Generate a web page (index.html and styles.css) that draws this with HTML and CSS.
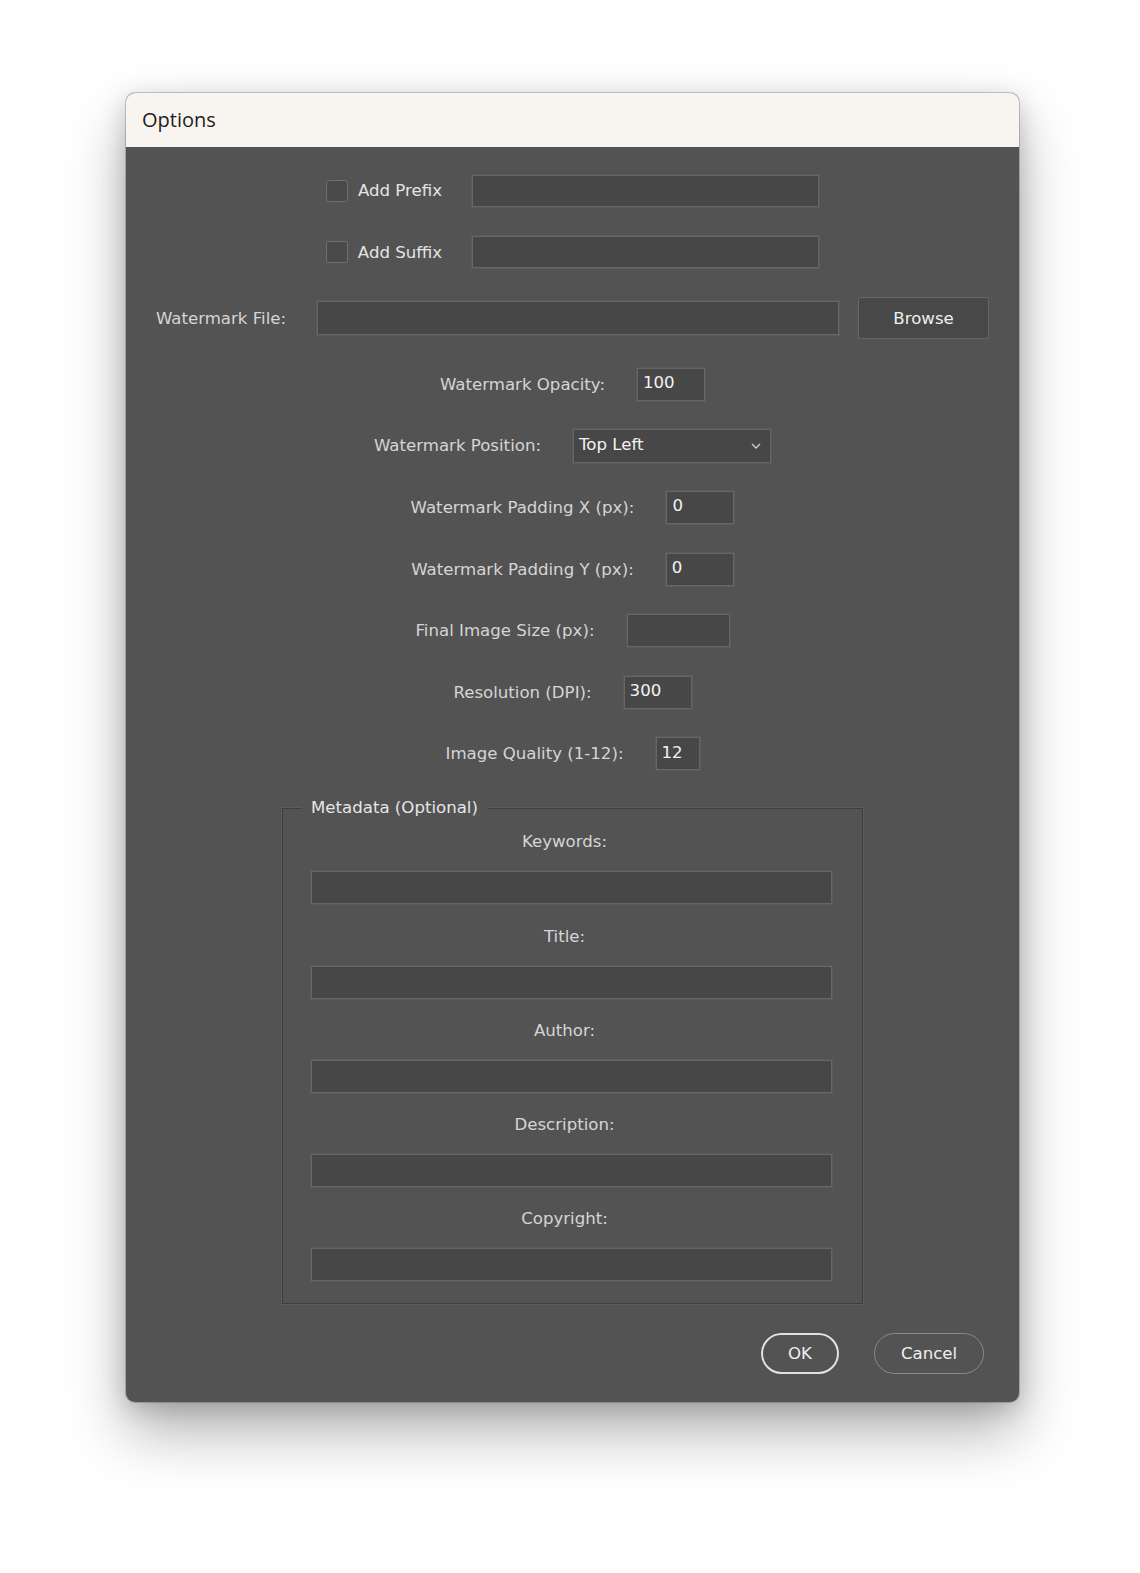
FILE: index.html
```html
<!DOCTYPE html>
<html lang="en">
<head>
<meta charset="utf-8">
<title>Options</title>
<link rel="stylesheet" href="styles.css">
</head>
<body>
<div class="dialog">
  <div class="titlebar">Options</div>
  <div class="content">
    <div class="rows">
      <div class="row">
        <span class="checkbox"></span>
        <span class="check-label">Add Prefix</span>
        <span class="field affix"></span>
      </div>
      <div class="row">
        <span class="checkbox"></span>
        <span class="check-label">Add Suffix</span>
        <span class="field affix"></span>
      </div>
      <div class="row row-file">
        <span class="label">Watermark File:</span>
        <span class="field file"></span>
        <button class="browse">Browse</button>
      </div>
      <div class="row">
        <span class="label">Watermark Opacity:</span>
        <span class="field small">100</span>
      </div>
      <div class="row">
        <span class="label">Watermark Position:</span>
        <span class="field select">Top Left
          <svg class="chev" width="10" height="6" viewBox="0 0 10 6"><polyline points="1,1 5,5 9,1" fill="none" stroke="#cfcfcf" stroke-width="1.3"/></svg>
        </span>
      </div>
      <div class="row">
        <span class="label">Watermark Padding X (px):</span>
        <span class="field small">0</span>
      </div>
      <div class="row">
        <span class="label">Watermark Padding Y (px):</span>
        <span class="field small">0</span>
      </div>
      <div class="row">
        <span class="label">Final Image Size (px):</span>
        <span class="field medium"></span>
      </div>
      <div class="row">
        <span class="label">Resolution (DPI):</span>
        <span class="field small">300</span>
      </div>
      <div class="row">
        <span class="label">Image Quality (1-12):</span>
        <span class="field tiny">12</span>
      </div>
    </div>

    <div class="panel">
      <span class="legend">Metadata (Optional)</span>
      <div class="meta-item">
        <div class="meta-label">Keywords:</div>
        <div class="field meta-field"></div>
      </div>
      <div class="meta-item">
        <div class="meta-label">Title:</div>
        <div class="field meta-field"></div>
      </div>
      <div class="meta-item">
        <div class="meta-label">Author:</div>
        <div class="field meta-field"></div>
      </div>
      <div class="meta-item">
        <div class="meta-label">Description:</div>
        <div class="field meta-field"></div>
      </div>
      <div class="meta-item">
        <div class="meta-label">Copyright:</div>
        <div class="field meta-field"></div>
      </div>
    </div>

    <div class="actions">
      <button class="pill ok">OK</button>
      <button class="pill cancel">Cancel</button>
    </div>
  </div>
</div>
</body>
</html>
```

FILE: styles.css
```css
html, body {
  margin: 0;
  padding: 0;
  background: #ffffff;
}

body {
  height: 1573px;
  padding-top: 93px;
  box-sizing: border-box;
}

.dialog {
  width: 893px;
  margin-left: 126px;
  border-radius: 9px;
  overflow: hidden;
  background: #535353;
  box-shadow: 0 30px 60px rgba(0, 0, 0, 0.30), 0 6px 24px rgba(0, 0, 0, 0.18), 0 0 0 1px #cfcfcf;
}

.titlebar {
  height: 54px;
  box-sizing: border-box;
  background: #f8f4ef;
  padding-left: 16px;
  display: flex;
  align-items: center;
  font-family: "Open Sans", "Noto Sans", sans-serif;
  font-size: 20px;
  color: #1e1e1e;
  padding-bottom: 2px;
}

.content {
  padding: 27px 0 28px;
  font-family: "DejaVu Sans", "Liberation Sans", sans-serif;
  font-size: 16.6px;
  color: #d5d5d5;
  display: flex;
  flex-direction: column;
}

.rows {
  display: flex;
  flex-direction: column;
  gap: 28.6px;
}

.row {
  height: 33px;
  display: flex;
  align-items: center;
  justify-content: center;
  gap: 32px;
}

.row > * {
  flex-shrink: 0;
}

.row-file {
  height: 42px;
  gap: 0;
}

.checkbox {
  width: 22px;
  height: 22px;
  box-sizing: border-box;
  border: 1px solid #707070;
  border-radius: 3px;
  background: #4a4a4a;
  margin-right: -22px;
}

.check-label {
  color: #e4e4e4;
  margin-right: -2px;
}

.label {
  white-space: nowrap;
}

.field {
  box-sizing: border-box;
  height: 33px;
  background: #474747;
  border: 1px solid #666666;
  box-shadow: 0 0 0 1px #5a5a5a;
  color: #f2f2f2;
  padding: 0 5px;
  display: flex;
  align-items: center;
  line-height: 20px;
  padding-bottom: 2px;
}

.affix {
  width: 347px;
  height: 32px;
}

.file {
  width: 522px;
  height: 34px;
  margin-left: 31px;
}

.browse {
  width: 131px;
  height: 42px;
  margin-left: 19px;
  background: #484848;
  border: 1px solid #666666;
  border-radius: 2px;
  color: #efefef;
  font-family: "DejaVu Sans", "Liberation Sans", sans-serif;
  font-size: 16.6px;
  padding: 0;
}

.small {
  width: 68px;
}

.tiny {
  width: 44px;
}

.medium {
  width: 103px;
}

.select {
  width: 198px;
  height: 34px;
  justify-content: space-between;
  padding-right: 9px;
}

.chev {
  display: block;
  margin-top: 2px;
}

.panel {
  position: relative;
  align-self: center;
  width: 581px;
  box-sizing: border-box;
  margin-top: 38px;
  border: 1px solid #3e3e3e;
  box-shadow: 0 0 0 1px #5c5c5c;
  padding: 23px 30px 22px 28px;
  display: flex;
  flex-direction: column;
  gap: 22.2px;
}

.legend {
  position: absolute;
  top: -12px;
  left: 18px;
  padding: 0 10px;
  line-height: 22px;
  background: #535353;
  color: #e6e6e6;
}

.meta-item {
  display: flex;
  flex-direction: column;
  gap: 19px;
}

.meta-label {
  line-height: 20px;
  text-align: center;
  padding-right: 14px;
}

.meta-field {
  width: 100%;
  height: 33px;
}

.actions {
  margin-top: 29px;
  padding-right: 35px;
  display: flex;
  justify-content: flex-end;
  gap: 35px;
}

.pill {
  height: 41px;
  border-radius: 21px;
  background: transparent;
  font-family: "DejaVu Sans", "Liberation Sans", sans-serif;
  font-size: 16.6px;
  color: #efefef;
  padding: 0;
}

.ok {
  width: 78px;
  border: 2px solid #e2e2e2;
}

.cancel {
  width: 110px;
  border: 1.5px solid #8a8a8a;
}
```
